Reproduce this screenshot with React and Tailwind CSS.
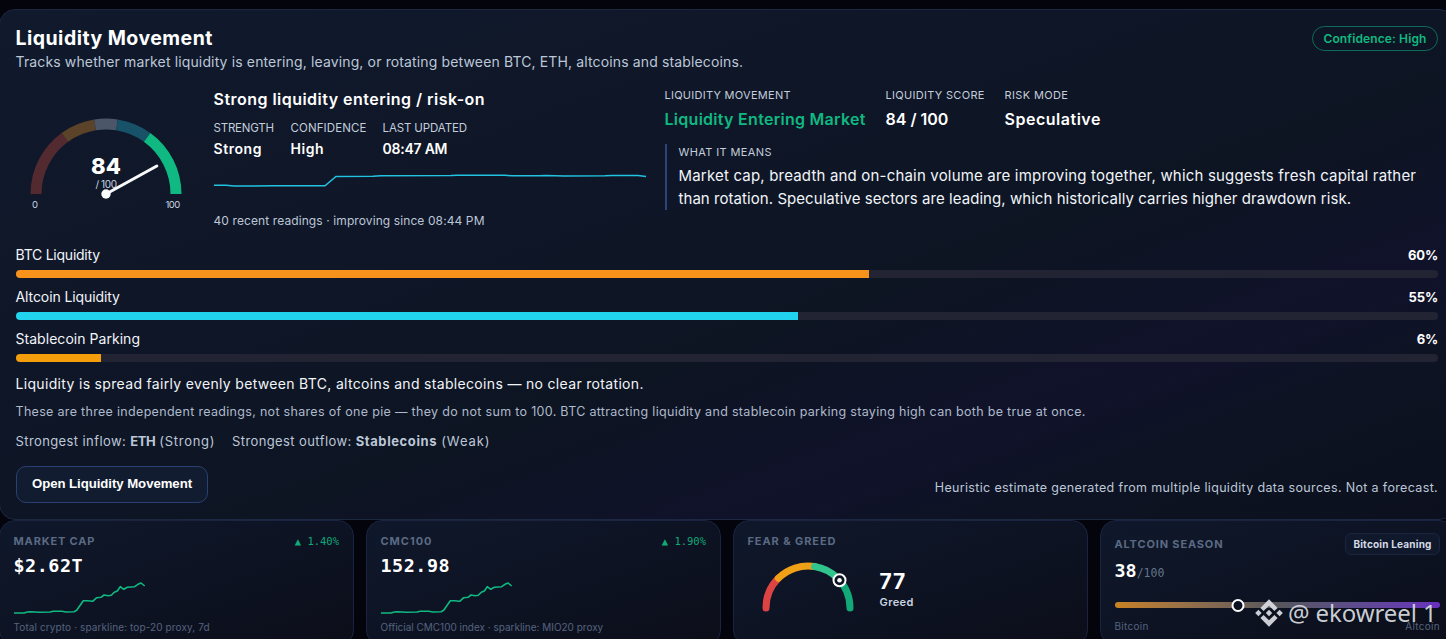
import React from 'react';
import clsx from 'clsx';

const GAUGE_BANDS = [
  { from: 0, to: 30, color: '#542a31' },
  { from: 30, to: 45, color: '#5b432a' },
  { from: 45, to: 55, color: '#4b5669' },
  { from: 55, to: 70, color: '#175269' },
  { from: 70, to: 100, color: '#10b981' }
];

const FEAR_BANDS = [
  { from: 0, to: 25, color: '#dc4444' },
  { from: 25, to: 55, color: '#eea016' },
  { from: 55, to: 75, color: '#32c48d' },
  { from: 75, to: 100, color: '#12a877' }
];

const BARS = [
  { label: 'BTC Liquidity', value: 60, color: 'bg-[#f7931a]', tracking: 'tracking-[-0.24px]' },
  { label: 'Altcoin Liquidity', value: 55, color: 'bg-[#22d3ee]', tracking: 'tracking-[-0.09px]' },
  { label: 'Stablecoin Parking', value: 6, color: 'bg-[#f59e0b]', tracking: 'tracking-[0.04px]' }
];

const TREND =
  '0,19.3 12,19.3 20,20 60,19.8 111,19.8 122,10.5 159,10.3 167,9.8 237,9.6 243,9.2 291,9.3 298,9.8 325,9.8 332,9.4 350,9.9 391,9.8 398,9.4 424,9.4 432,10.4';

const SPARK =
  '0,33 10,33 13.3,32 16,31.7 21,32 25.3,32.3 36,32 39.3,31.3 47.7,31.3 52,32 60,31.7 62.7,30.3 69.3,20.7 73.3,20.7 78.7,21.3 82.7,17.7 87,17.3 90,15 94.3,15.7 97.3,15.3 100.3,12.3 103.3,11 106.3,6.7 109.7,9.3 113.3,7.3 120.7,6.7 124,4.3 127,3 130.7,6';

// value 0-100 -> point on the upper half circle
const polar = (cx, cy, r, value) => {
  const a = Math.PI * (1 - value / 100);
  return [cx + r * Math.cos(a), cy - r * Math.sin(a)];
};

const arc = (cx, cy, r, from, to) => {
  const [x1, y1] = polar(cx, cy, r, from);
  const [x2, y2] = polar(cx, cy, r, to);
  return `M${x1} ${y1} A${r} ${r} 0 0 1 ${x2} ${y2}`;
};

function LiquidityGauge({ value }) {
  const [nx, ny] = polar(90, 84, 58, value);
  return (
    <svg width="181" height="110" viewBox="0 0 181 110" className="mt-6">
      {GAUGE_BANDS.map(b => (
        <path key={b.from} d={arc(90, 84, 70, b.from, b.to)} fill="none" stroke={b.color} strokeWidth="11" />
      ))}
      <text x="90" y="64" textAnchor="middle" fill="#fff" fontSize="22" fontWeight="800">{value}</text>
      <text x="90" y="78" textAnchor="middle" fill="#cbd5e1" fontSize="10" letterSpacing="-0.4">/ 100</text>
      <line x1="90" y1="84" x2={nx} y2={ny} stroke="#f8fafc" strokeWidth="3" strokeLinecap="round" />
      <circle cx="90" cy="84" r="4.7" fill="#f8fafc" />
      <text x="19" y="98" textAnchor="middle" fill="#cbd5e1" fontSize="9.5">0</text>
      <text x="156.5" y="98" textAnchor="middle" fill="#cbd5e1" fontSize="9.5" letterSpacing="-0.6">100</text>
    </svg>
  );
}

function FearGauge({ value }) {
  const [mx, my] = polar(49, 50, 42, value);
  return (
    <svg width="98" height="58" viewBox="0 0 98 58">
      {FEAR_BANDS.map(b => (
        <path key={b.from} d={arc(49, 50, 42, b.from, b.to)} fill="none" stroke={b.color} strokeWidth="7" strokeLinecap="round" />
      ))}
      <circle cx={mx} cy={my} r="6" fill="#0b1120" stroke="#fff" strokeWidth="2" />
      <circle cx={mx} cy={my} r="2.3" fill="#fff" />
    </svg>
  );
}

function Stat({ label, value, labelClass, valueClass }) {
  return (
    <div className="whitespace-nowrap">
      <div className={clsx('leading-4 text-[#c3cddb]', labelClass)}>{label}</div>
      <div className={clsx('font-semibold', valueClass)}>{value}</div>
    </div>
  );
}

function Card({ children }) {
  return (
    <div className="h-[126px] rounded-[16px] border border-[#1a2340] bg-linear-to-br from-[#0f182b] via-[#0d1323] to-[#0c0e19] pl-[13.5px] pr-3.5 pt-3">
      {children}
    </div>
  );
}

function CardTitle({ className, children }) {
  return <span className={clsx('text-[11px] leading-4 font-bold text-[#5b6a83]', className)}>{children}</span>;
}

function IndexCard({ title, titleClass, change, value, note, noteClass }) {
  return (
    <Card>
      <div className="flex h-4 items-center justify-between">
        <CardTitle className={titleClass}>{title}</CardTitle>
        <span className="font-['DejaVu_Sans_Mono',monospace] text-[10.5px] leading-4 text-[#10a977]">▲ {change}</span>
      </div>
      <div className="mt-1 h-6 font-['DejaVu_Sans_Mono',monospace] text-[18.4px] leading-[26px] font-bold tracking-[0.55px] text-white">{value}</div>
      <svg width="132" height="36" viewBox="0 0 132 36" className="mt-[3px] overflow-visible">
        <polyline points={SPARK} fill="none" stroke="#10b981" strokeWidth="1.6" strokeLinejoin="round" />
      </svg>
      <div className={clsx('mt-0.5 text-[10px] leading-[18px] whitespace-nowrap text-[#55637f]', noteClass)}>{note}</div>
    </Card>
  );
}

function Watermark() {
  return (
    <div className="absolute top-[598px] left-[1255px] flex items-center text-[#d6d9de]/95">
      <svg width="28" height="28" viewBox="0 0 28 28" fill="currentColor">
        <path d="M14 0.3 L22.6 8.9 L19.4 12.1 L14 6.7 L8.6 12.1 L5.4 8.9 Z" />
        <path d="M14 27.7 L22.6 19.1 L19.4 15.9 L14 21.3 L8.6 15.9 L5.4 19.1 Z" />
        <path d="M14 10.8 L17.2 14 L14 17.2 L10.8 14 Z" />
        <path d="M3.4 10.8 L6.6 14 L3.4 17.2 L0.2 14 Z" />
        <path d="M24.6 10.8 L27.8 14 L24.6 17.2 L21.4 14 Z" />
      </svg>
      <span className="ml-[5px] font-['Noto_Sans',sans-serif] text-[24px] leading-[30px] tracking-[-0.1px] whitespace-nowrap">@ ekowreel 1</span>
    </div>
  );
}

export default function App() {
  return (
    <div className="relative h-[639px] w-[1446px] overflow-hidden bg-[#03040c] pt-[9px] font-['Inter','Liberation_Sans',sans-serif]">
      <div className="-ml-px w-[1456px]">
        <section className="h-[511px] rounded-[16px] border border-[#1c2742] bg-linear-[160deg,#101a2c_0%,#0f1628_35%,#0d1422_58%,#10122a_75%,#0d1322_85%,#0c101e_100%] pr-4 pl-[15.5px] pt-[15px]">
          <header className="flex items-start justify-between">
            <div>
              <h2 className="pt-px text-[19.5px] leading-6 font-bold tracking-[0.47px] text-white">Liquidity Movement</h2>
              <p className="mt-0.5 text-sm leading-5 tracking-[0.137px] text-[#bcc7d7]">
                Tracks whether market liquidity is entering, leaving, or rotating between BTC, ETH, altcoins and stablecoins.
              </p>
            </div>
            <span className="mt-px flex h-[25px] w-[126px] items-center justify-center rounded-full border border-[#0f6b58] text-xs font-semibold tracking-[0.12px] text-[#10b981]">
              Confidence: High
            </span>
          </header>

          <div className="mt-3.5 grid h-[159px] grid-cols-[181.5px_432px_774px] gap-x-[16px]">
            <LiquidityGauge value={84} />

            <div className="pt-[3px] pl-[0.5px]">
              <h3 className="text-base leading-5 font-semibold tracking-[0.47px] text-white">Strong liquidity entering / risk-on</h3>
              <div className="mt-[11px] flex gap-4">
                <Stat label="STRENGTH" value="Strong" labelClass="w-[61px] text-[11.5px] tracking-[-0.2px]" valueClass="mt-1 text-sm leading-[18px] tracking-[0.57px] text-white" />
                <Stat label="CONFIDENCE" value="High" labelClass="w-[76px] text-[11.5px] tracking-[0.1px]" valueClass="mt-1 text-sm leading-[18px] tracking-[0.52px] text-white" />
                <Stat label="LAST UPDATED" value="08:47 AM" labelClass="text-[11.5px] tracking-[-0.12px]" valueClass="mt-1 text-sm leading-[18px] tracking-[-0.24px] text-white" />
              </div>
              <svg width="432" height="40" viewBox="0 0 432 40" className="mt-2">
                <polyline points={TREND} fill="none" stroke="#22c3e0" strokeWidth="1.5" />
              </svg>
              <p className="mt-[6px] text-xs leading-[18px] tracking-[0.1px] text-[#bcc7d7]">40 recent readings · improving since 08:44 PM</p>
            </div>

            <div className="pl-[3.5px] pt-px">
              <div className="flex gap-5">
                <Stat label="LIQUIDITY MOVEMENT" value="Liquidity Entering Market" labelClass="text-[11px] tracking-[0.26px]" valueClass="mt-[6px] w-[201px] text-base leading-5 tracking-[0.28px] text-[#10b981]" />
                <Stat label="LIQUIDITY SCORE" value="84 / 100" labelClass="w-[99px] text-[11px] tracking-[0.3px]" valueClass="mt-[6px] text-base leading-5 text-white" />
                <Stat label="RISK MODE" value="Speculative" labelClass="text-[11px] tracking-[0.37px]" valueClass="mt-[6px] text-base leading-5 tracking-[0.52px] text-white" />
              </div>
              <div className="mt-[15px] ml-[0.5px] h-[66px] border-l-2 border-[#2c4479] pl-[11.5px]">
                <div className="text-[11px] leading-4 tracking-[0.37px] text-[#c3cddb]">WHAT IT MEANS</div>
                <p className="mt-1 text-[15px] leading-[23px] whitespace-nowrap text-[#f1f5f9]">
                  <span className="tracking-[0.183px]">Market cap, breadth and on-chain volume are improving together, which suggests fresh capital rather</span>
                  <br />
                  <span className="tracking-[0.058px]">than rotation. Speculative sectors are leading, which historically carries higher drawdown risk.</span>
                </p>
              </div>
            </div>
          </div>

          <div className="ml-[0.5px] flex flex-col gap-[9px]">
            {BARS.map(bar => (
              <div key={bar.label}>
                <div className="-ml-[0.5px] flex items-center justify-between text-sm leading-5 text-[#f1f5f9]">
                  <span className={bar.tracking}>{bar.label}</span>
                  <span className="text-[13px] font-bold tracking-[-0.15px] text-white">{bar.value}%</span>
                </div>
                <div className="mt-[5px] h-2 overflow-hidden rounded-full bg-[#222433]">
                  <div className={clsx('h-full', bar.color)} style={{ width: `${bar.value}%` }} />
                </div>
              </div>
            ))}
          </div>

          <p className="mt-3 text-[14px] leading-5 tracking-[0.325px] text-[#f1f5f9]">
            Liquidity is spread fairly evenly between BTC, altcoins and stablecoins — no clear rotation.
          </p>
          <p className="mt-[9px] text-[12.5px] leading-[18px] tracking-[0.312px] whitespace-nowrap text-[#aebacb]">
            These are three independent readings, not shares of one pie — they do not sum to 100. BTC attracting liquidity and stablecoin parking staying high can both be true at once.
          </p>
          <div className="mt-2.5 flex gap-[18px] text-[13px] leading-5 tracking-[0.4px] text-[#bcc7d7]">
            <span className="w-[198.5px] whitespace-nowrap">Strongest inflow: <b className="tracking-[-0.4px]">ETH</b> <span className="tracking-[0.7px]">(Strong)</span></span>
            <span className="whitespace-nowrap">Strongest outflow: <b className="tracking-[0.6px]">Stablecoins</b> <span className="tracking-[0.9px]">(Weak)</span></span>
          </div>

          <div className="mt-[15px] flex items-center justify-between">
            <button className="ml-[0.5px] h-[37px] w-[192px] rounded-[10px] border border-[#2a4072] bg-[#111c30] pb-px font-['Liberation_Sans',sans-serif] text-[13.2px] font-bold tracking-[-0.05px] text-white">
              Open Liquidity Movement
            </button>
            <span className="mt-[7px] text-[12.5px] leading-5 tracking-[0.34px] text-[#bcc7d7]">
              Heuristic estimate generated from multiple liquidity data sources. Not a forecast.
            </span>
          </div>
        </section>

        <div className="grid grid-cols-4 gap-3">
          <IndexCard title="MARKET CAP" titleClass="tracking-[0.84px]" change="1.40%" value="$2.62T" note="Total crypto · sparkline: top-20 proxy, 7d" noteClass="tracking-[0.11px]" />
          <IndexCard title="CMC100" titleClass="tracking-[0.98px]" change="1.90%" value="152.98" note="Official CMC100 index · sparkline: MIO20 proxy" noteClass="tracking-[-0.01px]" />

          <Card>
            <CardTitle className="block tracking-[0.91px]">FEAR & GREED</CardTitle>
            <div className="ml-[11px] mt-[9px] flex items-start">
              <FearGauge value={77} />
              <div className="ml-[23px] mt-[11px]">
                <div className="text-[21px] leading-[25px] font-bold tracking-[1px] text-white">77</div>
                <div className="text-[11px] leading-4 font-semibold tracking-[0.4px] text-[#cbd5e1]">Greed</div>
              </div>
            </div>
          </Card>

          <Card>
            <div className="flex items-center justify-between">
              <CardTitle className="tracking-[0.84px]">ALTCOIN SEASON</CardTitle>
              <span className="flex h-[22px] w-[95px] items-center justify-center rounded-md border border-[#1b2540] bg-[#0f192b] text-[10px] font-bold tracking-[0.2px] whitespace-nowrap text-[#d5dbe5]">
                Bitcoin Leaning
              </span>
            </div>
            <div className="mt-1 h-6 font-['DejaVu_Sans_Mono',monospace] leading-6">
              <span className="text-[18.4px] font-bold text-white">38</span>
              <span className="text-[11.5px] text-[#64748b]">/100</span>
            </div>
            <div className="relative mt-[19px] h-1.5 rounded-full bg-linear-to-r from-[#c98220] via-[#56565c] to-[#6a2fc0]">
              <span className="absolute -top-[3.5px] left-[38%] h-[13px] w-[13px] -translate-x-1/2 rounded-full border-2 border-white bg-[#0b1120]" />
            </div>
            <div className="mt-[10px] flex justify-between text-[10px] leading-4 tracking-[0.3px] text-[#55637f]">
              <span>Bitcoin</span>
              <span>Altcoin</span>
            </div>
          </Card>
        </div>
      </div>
      <Watermark />
    </div>
  );
}
